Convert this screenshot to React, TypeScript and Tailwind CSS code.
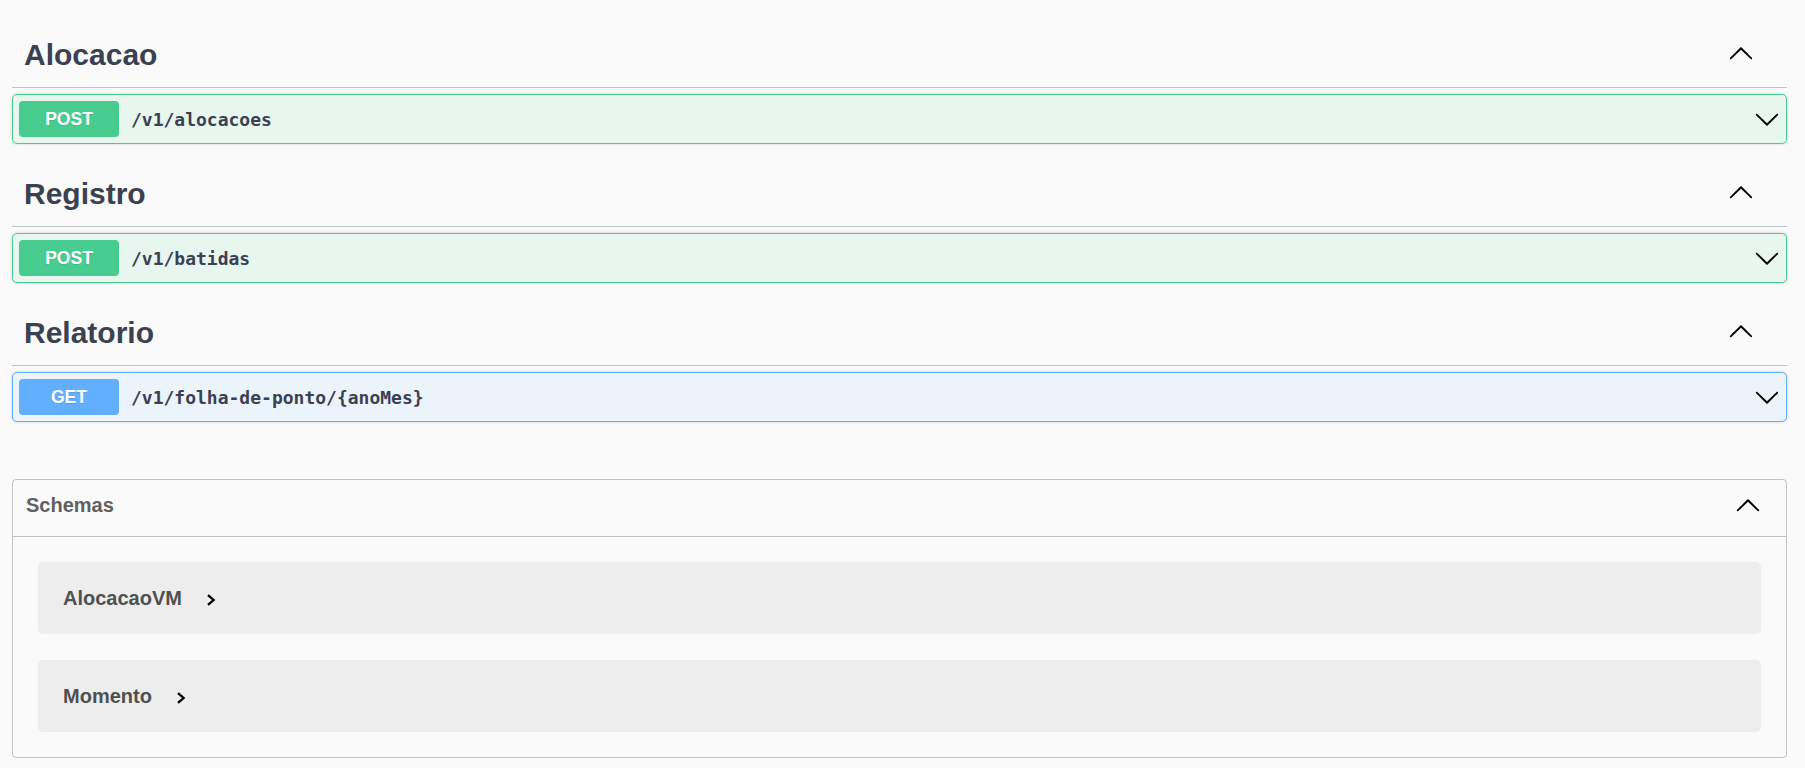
const sans = "font-['Liberation_Sans',Arial,sans-serif]";
const mono = "font-['DejaVu_Sans_Mono','Liberation_Mono',monospace]";

type Method = "POST" | "GET";

type Tag = {
  name: string;
  method: Method;
  path: string;
};

const tags: Tag[] = [
  { name: "Alocacao", method: "POST", path: "/v1/alocacoes" },
  { name: "Registro", method: "POST", path: "/v1/batidas" },
  { name: "Relatorio", method: "GET", path: "/v1/folha-de-ponto/{anoMes}" },
];

const schemas = ["AlocacaoVM", "Momento"];

const ARROW =
  "M17.418 6.109c.272-.268.709-.268.979 0s.271.701 0 .969l-7.908 7.83c-.27.268-.707.268-.979 0l-7.908-7.83c-.27-.268-.27-.701 0-.969.271-.268.709-.268.979 0L10 13.25l7.418-7.141z";

function Arrow({ up = false }: { up?: boolean }) {
  return (
    <svg width="26" height="26" viewBox="0 0 20 20" className="shrink-0">
      <path d={ARROW} fill="#000" transform={up ? "rotate(180 10 10)" : undefined} />
    </svg>
  );
}

function Chevron() {
  return (
    <svg width="10" height="12" viewBox="0 0 10 12" className="shrink-0">
      <path d="M2 1.2 L7.6 6 L2 10.8" fill="none" stroke="#000" strokeWidth="2.3" />
    </svg>
  );
}

function Operation({ method, path }: { method: Method; path: string }) {
  const isPost = method === "POST";
  return (
    <div
      className={`mb-[20px] flex h-[50px] items-center rounded-[5px] border p-[6px] shadow-[0_0_3px_rgba(0,0,0,0.19)] ${
        isPost ? "border-[#49cc90] bg-[#e8f6f0]" : "border-[#61affe] bg-[#ebf3fb]"
      }`}
    >
      <span
        className={`flex h-[36px] w-[100px] shrink-0 items-center justify-center rounded-[4px] text-[17.5px] font-bold text-white [text-shadow:0_1px_0_rgba(0,0,0,0.1)] ${
          isPost ? "bg-[#49cc90]" : "bg-[#61affe]"
        }`}
      >
        {method}
      </span>
      <span className={`${mono} ml-[12px] text-[18px] font-bold text-[#3b4151]`}>{path}</span>
      <span className="ml-auto flex">
        <Arrow />
      </span>
    </div>
  );
}

export default function App() {
  return (
    <div className={`${sans} min-h-screen bg-[#fafafa] pl-[12px] pr-[18px] pt-[25px]`}>
      {tags.map((t) => (
        <section key={t.name}>
          <div className="mb-[6px] flex h-[63px] items-center justify-between border-b border-[rgba(59,65,81,0.3)] pl-[12px] pr-[33px]">
            <h3 className="mb-[3px] text-[30px] font-bold leading-[30px] text-[#3b4151]">{t.name}</h3>
            <span className="mb-[4px] flex">
              <Arrow up />
            </span>
          </div>
          <Operation method={t.method} path={t.path} />
        </section>
      ))}

      <section className="mt-[57px] rounded-[4px] border border-[rgba(59,65,81,0.3)]">
        <div className="flex h-[57px] items-center justify-between border-b border-[rgba(59,65,81,0.3)] pl-[13px] pr-[25px]">
          <h4 className="mb-[6px] text-[20px] font-bold leading-[20px] text-[#606060]">Schemas</h4>
          <span className="mb-[4px] flex">
            <Arrow up />
          </span>
        </div>
        <div className="flex flex-col gap-[26px] px-[25px] py-[25px]">
          {schemas.map((s) => (
            <div key={s} className="flex h-[72px] items-center rounded-[5px] bg-[rgba(0,0,0,0.05)] pl-[25px]">
              <span className="text-[20px] font-bold leading-[20px] text-[#505050]">{s}</span>
              <span className="ml-[24px] mt-[3px] flex">
                <Chevron />
              </span>
            </div>
          ))}
        </div>
      </section>
    </div>
  );
}
